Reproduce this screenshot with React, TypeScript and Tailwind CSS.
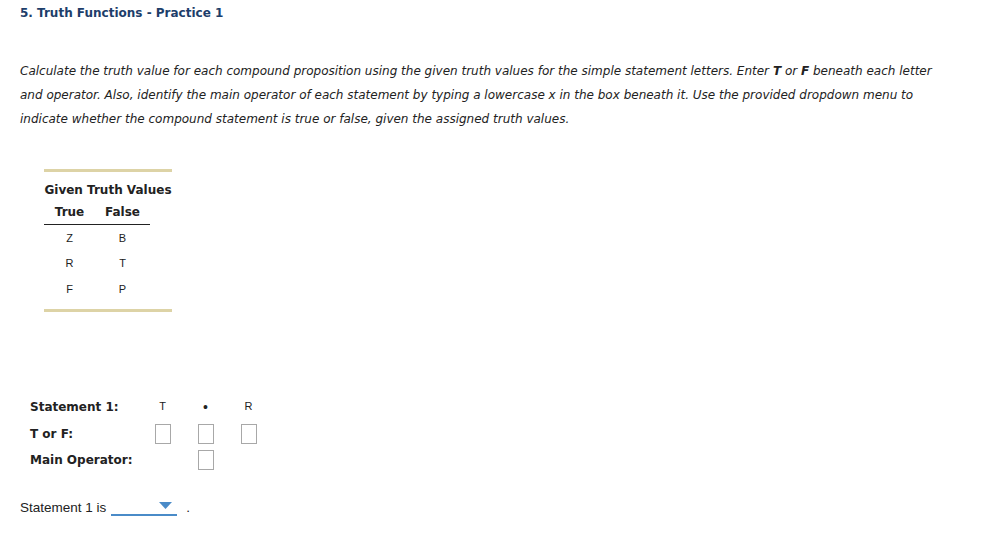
import React from 'react';

const verdana = { fontFamily: '"DejaVu Sans", Verdana, sans-serif' };
const arial = { fontFamily: '"Liberation Sans", Arial, sans-serif' };

const givenValues = [
  ['Z', 'B'],
  ['R', 'T'],
  ['F', 'P'],
];

const statementLetters = ['T', '•', 'R'];

function Box() {
  return <div className="w-[16px] h-[20px] border border-[#a8a8a8] bg-white" />;
}

export default function App() {
  return (
    <div className="w-[1002px] h-[541px] bg-white text-[#222] overflow-hidden relative">
      {/* Title */}
      <div className="pl-[20px] pt-[5px]">
        <h1 className="text-[12px] leading-[16px] font-bold text-[#1d3e6a]" style={verdana}>
          5. Truth Functions - Practice 1
        </h1>
      </div>

      {/* Instructions */}
      <p className="pl-[20px] w-[942px] mt-[38px] text-[12px] leading-[24px] italic text-[#222]" style={verdana}>
        Calculate the truth value for each compound proposition using the given truth values for the simple statement letters. Enter{' '}
        <b>T</b> or <b>F</b> beneath each letter and operator. Also, identify the main operator of each statement by typing a lowercase x in the box beneath it. Use the provided dropdown menu to indicate whether the compound statement is true or false, given the assigned truth values.
      </p>

      {/* Given truth values */}
      <div className="ml-[44px] mt-[38px] w-[128px]">
        <div className="h-[3px] bg-[#ddd3a6]" />
        <div className="pt-[10px] text-[12px] leading-[16px] font-bold text-center" style={verdana}>
          Given Truth Values
        </div>
        <div className="w-[106px] mt-[7px]">
          <div className="grid grid-cols-[51px_55px] border-b border-[#222] pb-[4px] text-[12px] leading-[15px] font-bold text-center" style={verdana}>
            <span>True</span>
            <span>False</span>
          </div>
          <div className="text-[11px] text-center" style={arial}>
            {givenValues.map(([t, f]) => (
              <div key={t} className="grid grid-cols-[51px_55px] h-[25.5px] items-center">
                <span>{t}</span>
                <span>{f}</span>
              </div>
            ))}
          </div>
        </div>
        <div className="mt-[7px] h-[3px] bg-[#ddd3a6]" />
      </div>

      {/* Statement 1 */}
      <div className="ml-[30px] mt-[85px] grid grid-cols-[111px_43px_43px_43px] grid-rows-[20px_34px_18px] items-center">
        <span className="text-[12px] font-bold" style={verdana}>Statement 1:</span>
        {statementLetters.map((l, i) => (
          <span key={i} className={`text-center text-[11px] ${l === '•' ? 'text-[14px] leading-none' : ''}`} style={arial}>
            {l}
          </span>
        ))}
        <span className="text-[12px] font-bold" style={verdana}>T or F:</span>
        {statementLetters.map((_, i) => (
          <div key={i} className="flex justify-center">
            <Box />
          </div>
        ))}
        <span className="text-[12px] font-bold" style={verdana}>Main Operator:</span>
        <span />
        <div className="flex justify-center">
          <Box />
        </div>
        <span />
      </div>

      {/* Dropdown */}
      <div className="ml-[20px] mt-[29px] flex items-end text-[13.5px]" style={arial}>
        <span className="leading-[16px]">Statement 1 is</span>
        <div className="ml-[5px] w-[66px] h-[18px] border-b-2 border-[#4a8bc8] flex justify-end items-center pr-[5px]">
          <svg width="13" height="7" viewBox="0 0 13 7">
            <polygon points="0,0 13,0 6.5,7" fill="#4a8bc8" />
          </svg>
        </div>
        <span className="ml-[9px] leading-[16px]">.</span>
      </div>
    </div>
  );
}
